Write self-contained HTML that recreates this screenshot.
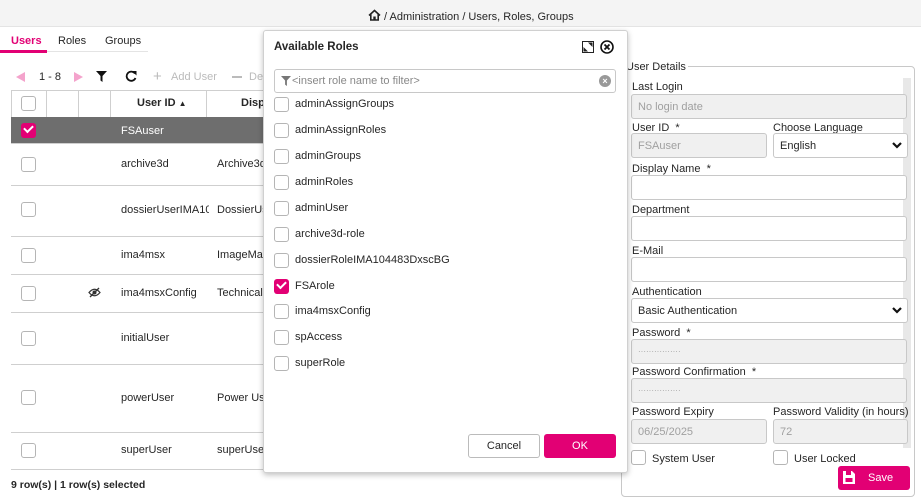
<!DOCTYPE html>
<html><head><meta charset="utf-8"><style>
*{box-sizing:border-box;margin:0;padding:0}
body{width:921px;height:503px;overflow:hidden;background:#fff;font-family:"Liberation Sans",sans-serif;font-size:11px;color:#262626;position:relative}
.a{position:absolute}
.cb{position:absolute;width:15px;height:15px;border:1px solid #b5b5b5;border-radius:3px;background:#fff}
.cbk{position:absolute;width:15px;height:15px;border-radius:3px;background:#e20074}
.cbk:after{content:"";position:absolute;left:3px;top:2px;width:7px;height:4px;border-left:2.5px solid #fff;border-bottom:2.5px solid #fff;transform:rotate(-45deg)}
.hl{position:absolute;left:11px;width:253px;height:1px;background:#cfcfcf}
.lbl{position:absolute;font-size:11px;color:#262626}
.inp{position:absolute;height:25px;border:1px solid #c8c8c8;border-radius:3px;background:#fff;font-size:11px;padding:6px 6px;color:#262626}
.dis{background:#f0f0f0;color:#a0a0a0}
.role{position:absolute;left:295px;font-size:11px}
.chev{position:absolute;right:5px;top:8px}
</style></head><body>
<div class="a" style="left:0;top:0;width:921px;height:27px;background:#f4f4f4;border-bottom:1px solid #e4e4e4"></div>
<div class="a" style="left:368px;top:9px;font-size:11px;">
<svg width="13" height="12" viewBox="0 0 13 12" style="vertical-align:-1px"><path d="M1 6.5L6.5 1.5 12 6.5M2.8 5v6h7.4V5" fill="none" stroke="#222" stroke-width="1.6"/><rect x="5.3" y="7.5" width="2.4" height="3.5" fill="#222"/></svg> / Administration / Users, Roles, Groups</div>
<div class="a" style="left:11px;top:35px;color:#e20074;font-weight:bold">Users</div>
<div class="a" style="left:58px;top:35px">Roles</div>
<div class="a" style="left:105px;top:35px">Groups</div>
<div class="a" style="left:0;top:51px;width:148px;height:1px;background:#e4e4e4"></div>
<div class="a" style="left:0;top:50px;width:47px;height:3px;background:#e20074"></div>
<div class="a" style="left:16px;top:72px;width:0;height:0;border-top:5px solid transparent;border-bottom:5px solid transparent;border-right:9px solid #f4a3cc"></div>
<div class="a" style="left:39px;top:71px">1 - 8</div>
<div class="a" style="left:74px;top:72px;width:0;height:0;border-top:5px solid transparent;border-bottom:5px solid transparent;border-left:9px solid #f4a3cc"></div>
<svg class="a" style="left:96px;top:71px" width="11" height="11" viewBox="0 0 11 11"><path d="M0 0h11L6.5 5v6L4.5 9.5V5z" fill="#111"/></svg>
<svg class="a" style="left:125px;top:70px" width="12" height="12" viewBox="0 0 12 12"><path d="M10 3.5A4.6 4.6 0 1 0 10.5 8" fill="none" stroke="#111" stroke-width="1.8"/><path d="M7 1h4.5v4.5z" fill="#111"/></svg>
<div class="a" style="left:153px;top:68px;color:#bbb;font-size:15px">+</div>
<div class="a" style="left:171px;top:71px;color:#bbb">Add User</div>
<div class="a" style="left:232px;top:76px;width:10px;height:2px;background:#bbb"></div>
<div class="a" style="left:249px;top:71px;color:#bbb">De</div>
<div class="hl" style="top:90px"></div>
<div class="hl" style="top:117px"></div>
<div class="a" style="left:11px;top:90px;width:1px;height:27px;background:#cfcfcf"></div>
<div class="a" style="left:46px;top:90px;width:1px;height:27px;background:#cfcfcf"></div>
<div class="a" style="left:78px;top:90px;width:1px;height:27px;background:#cfcfcf"></div>
<div class="a" style="left:110px;top:90px;width:1px;height:27px;background:#cfcfcf"></div>
<div class="a" style="left:206px;top:90px;width:1px;height:27px;background:#cfcfcf"></div>
<div class="cb" style="left:21px;top:96px"></div>
<div class="a" style="left:137px;top:97px;font-weight:bold">User ID <span style="font-size:8px">▲</span></div>
<div class="a" style="left:241px;top:97px;font-weight:bold">Disp</div>
<div class="a" style="left:11px;top:117px;width:253px;height:26px;background:#6e6e6e"></div>
<div class="cbk" style="left:21px;top:123px"></div>
<div class="a" style="left:121px;top:125px;color:#fff">FSAuser</div>
<div class="hl" style="top:143px"></div>
<div class="cb" style="left:21px;top:157px"></div><div class="a" style="left:121px;top:158px">archive3d</div><div class="a" style="left:217px;top:158px">Archive3d</div>
<div class="hl" style="top:185px"></div>
<div class="cb" style="left:21px;top:202px"></div><div class="a" style="left:121px;top:204px;width:88px;overflow:hidden;white-space:nowrap">dossierUserIMA104</div><div class="a" style="left:217px;top:204px">DossierUs</div>
<div class="hl" style="top:236px"></div>
<div class="cb" style="left:21px;top:248px"></div><div class="a" style="left:121px;top:249px">ima4msx</div><div class="a" style="left:217px;top:249px">ImageMas</div>
<div class="hl" style="top:274px"></div>
<div class="cb" style="left:21px;top:286px"></div>
<svg class="a" style="left:88px;top:287px" width="13" height="11" viewBox="0 0 13 11"><path d="M1 5.5Q6.5 -1 12 5.5Q6.5 12 1 5.5z" fill="none" stroke="#333" stroke-width="1.2"/><circle cx="6.5" cy="5.5" r="2" fill="#333"/><path d="M2 10L11 1" stroke="#333" stroke-width="1.3"/></svg>
<div class="a" style="left:121px;top:287px">ima4msxConfig</div><div class="a" style="left:217px;top:287px">Technical</div>
<div class="hl" style="top:312px"></div>
<div class="cb" style="left:21px;top:331px"></div><div class="a" style="left:121px;top:332px">initialUser</div>
<div class="hl" style="top:364px"></div>
<div class="cb" style="left:21px;top:390px"></div><div class="a" style="left:121px;top:392px">powerUser</div><div class="a" style="left:217px;top:392px">Power Use</div>
<div class="hl" style="top:432px"></div>
<div class="cb" style="left:21px;top:443px"></div><div class="a" style="left:121px;top:444px">superUser</div><div class="a" style="left:217px;top:444px">superUser</div>
<div class="hl" style="top:469px"></div>
<div class="a" style="left:11px;top:479px;font-weight:bold;font-size:10.5px">9 row(s) | 1 row(s) selected</div>
<div class="a" style="left:621px;top:66px;width:294px;height:431px;border:1px solid #c8c8c8;border-radius:4px"></div>
<div class="a" style="left:626px;top:61px;background:#fff;padding-right:2px">User Details</div>
<div class="a" style="left:903px;top:78px;width:8px;height:370px;background:#e8e8e8"></div>
<div class="lbl" style="left:632px;top:81px">Last Login</div>
<div class="inp dis" style="left:631px;top:94px;width:276px">No login date</div>
<div class="lbl" style="left:632px;top:122px">User ID &nbsp;*</div>
<div class="lbl" style="left:773px;top:122px">Choose Language</div>
<div class="inp dis" style="left:631px;top:133px;width:136px">FSAuser</div>
<div class="inp" style="left:773px;top:133px;width:135px">English<svg class="chev" width="10" height="7" viewBox="0 0 10 7"><path d="M1 1l4 4 4-4" fill="none" stroke="#111" stroke-width="2.2"/></svg></div>
<div class="lbl" style="left:632px;top:163px">Display Name &nbsp;*</div>
<div class="inp" style="left:631px;top:175px;width:276px"></div>
<div class="lbl" style="left:632px;top:204px">Department</div>
<div class="inp" style="left:631px;top:216px;width:276px"></div>
<div class="lbl" style="left:632px;top:245px">E-Mail</div>
<div class="inp" style="left:631px;top:257px;width:276px"></div>
<div class="lbl" style="left:632px;top:286px">Authentication</div>
<div class="inp" style="left:631px;top:298px;width:277px">Basic Authentication<svg class="chev" width="10" height="7" viewBox="0 0 10 7"><path d="M1 1l4 4 4-4" fill="none" stroke="#111" stroke-width="2.2"/></svg></div>
<div class="lbl" style="left:632px;top:327px">Password &nbsp;*</div>
<div class="inp dis" style="left:631px;top:339px;width:276px;font-size:8px;padding-top:7px">················</div>
<div class="lbl" style="left:632px;top:366px">Password Confirmation &nbsp;*</div>
<div class="inp dis" style="left:631px;top:378px;width:276px;font-size:8px;padding-top:7px">················</div>
<div class="lbl" style="left:632px;top:406px">Password Expiry</div>
<div class="lbl" style="left:773px;top:406px">Password Validity (in hours)</div>
<div class="inp dis" style="left:631px;top:419px;width:136px">06/25/2025</div>
<div class="inp dis" style="left:773px;top:419px;width:135px">72</div>
<div class="a" style="left:631px;top:450px;width:280px;height:16px;overflow:hidden">
<div class="cb" style="left:0;top:0"></div><div class="a" style="left:21px;top:3px">System User</div>
<div class="cb" style="left:142px;top:0"></div><div class="a" style="left:163px;top:3px">User Locked</div></div>
<div class="a" style="left:838px;top:466px;width:72px;height:24px;background:#e20074;border-radius:3px;color:#fff;padding:6px 0 0 30px">Save
<svg style="position:absolute;left:5px;top:5px" width="12" height="13" viewBox="0 0 12 13"><path d="M0 0h9l3 3v10H0z" fill="#fff"/><rect x="3" y="0" width="5" height="4" fill="#e20074"/><rect x="2.5" y="7" width="7" height="4" fill="#e20074"/></svg></div>
<div class="a" style="left:263px;top:30px;width:365px;height:443px;background:#fff;border:1px solid #d0d0d0;border-radius:3px;box-shadow:0 2px 6px rgba(0,0,0,.25)"></div>
<div class="a" style="left:274px;top:41px;font-weight:bold;font-size:11.5px">Available Roles</div>
<svg class="a" style="left:582px;top:41px" width="12" height="12" viewBox="0 0 12 12"><rect x=".5" y=".5" width="11" height="11" fill="none" stroke="#222"/><path d="M6 1.5h4.5v4.5z M1.5 6v4.5h4.5z" fill="#222"/></svg>
<svg class="a" style="left:600px;top:40px" width="14" height="14" viewBox="0 0 14 14"><circle cx="7" cy="7" r="6" fill="none" stroke="#111" stroke-width="1.6"/><path d="M4.5 4.5l5 5M9.5 4.5l-5 5" stroke="#111" stroke-width="1.8"/></svg>
<div class="a" style="left:274px;top:69px;width:342px;height:24px;border:1px solid #c8c8c8;border-radius:3px"></div>
<svg class="a" style="left:281px;top:76px" width="10" height="10" viewBox="0 0 11 11"><path d="M0 0h11L6.5 5v6L4.5 9.5V5z" fill="#777"/></svg>
<div class="a" style="left:292px;top:75px;color:#888">&lt;insert role name to filter&gt;</div>
<div class="a" style="left:599px;top:75px;width:12px;height:12px;border-radius:50%;background:#999;color:#fff;font-size:9px;line-height:12px;text-align:center;font-weight:bold">×</div>
<div class="cb" style="left:274px;top:97px"></div><div class="role" style="top:98px">adminAssignGroups</div>
<div class="cb" style="left:274px;top:123px"></div><div class="role" style="top:124px">adminAssignRoles</div>
<div class="cb" style="left:274px;top:149px"></div><div class="role" style="top:150px">adminGroups</div>
<div class="cb" style="left:274px;top:175px"></div><div class="role" style="top:176px">adminRoles</div>
<div class="cb" style="left:274px;top:201px"></div><div class="role" style="top:202px">adminUser</div>
<div class="cb" style="left:274px;top:227px"></div><div class="role" style="top:228px">archive3d-role</div>
<div class="cb" style="left:274px;top:253px"></div><div class="role" style="top:254px">dossierRoleIMA104483DxscBG</div>
<div class="cbk" style="left:274px;top:279px"></div><div class="role" style="top:280px">FSArole</div>
<div class="cb" style="left:274px;top:304px"></div><div class="role" style="top:305px">ima4msxConfig</div>
<div class="cb" style="left:274px;top:330px"></div><div class="role" style="top:331px">spAccess</div>
<div class="cb" style="left:274px;top:356px"></div><div class="role" style="top:357px">superRole</div>
<div class="a" style="left:468px;top:434px;width:72px;height:24px;border:1px solid #bbb;border-radius:3px;text-align:center;line-height:22px">Cancel</div>
<div class="a" style="left:544px;top:434px;width:72px;height:24px;background:#e20074;border-radius:3px;text-align:center;line-height:24px;color:#fff">OK</div>
</body></html>
